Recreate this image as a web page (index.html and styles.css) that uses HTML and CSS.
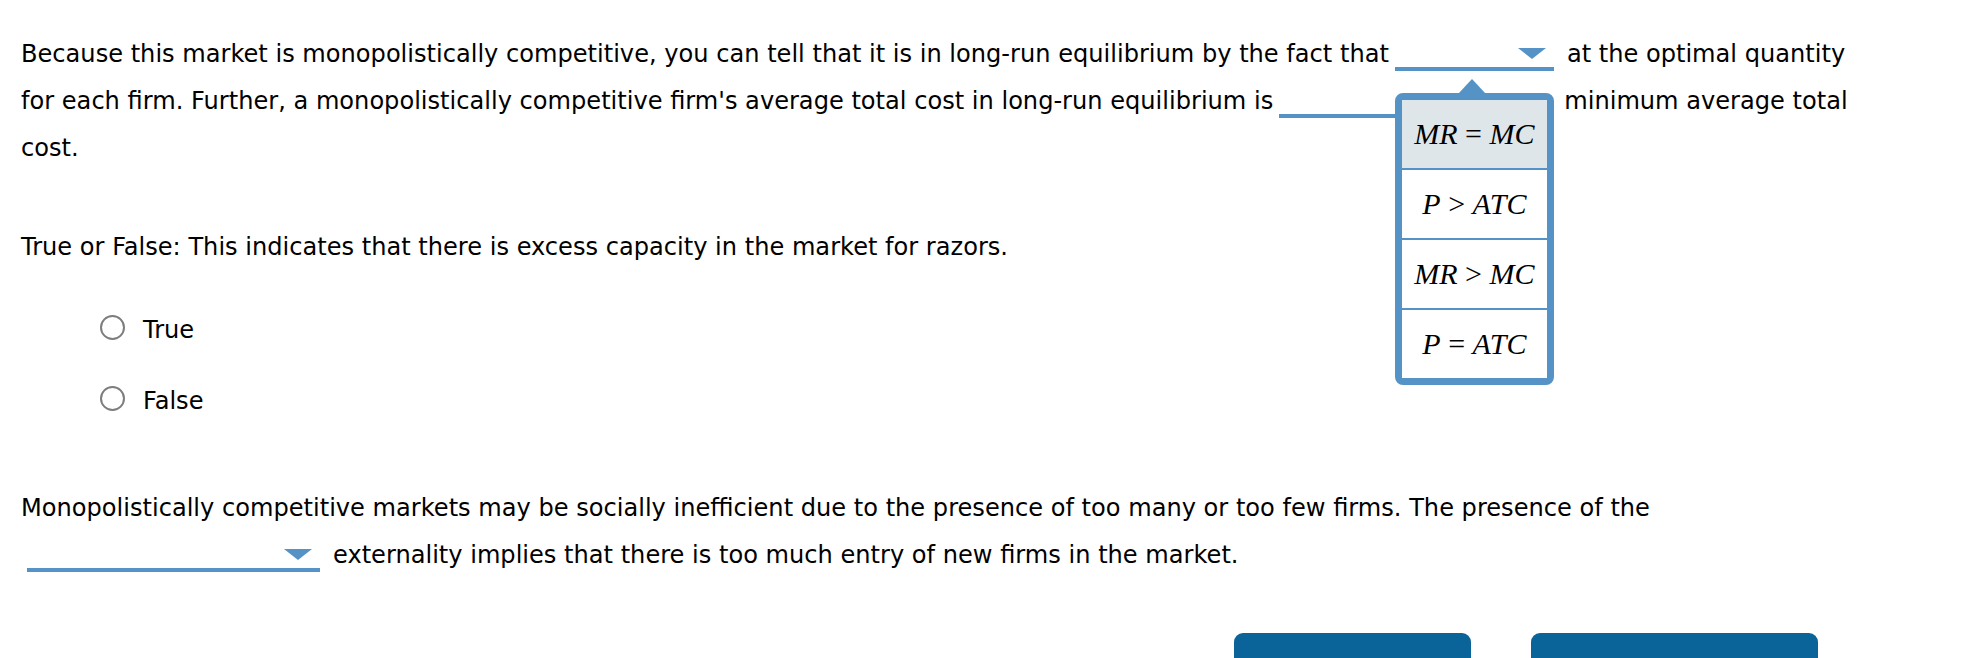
FILE: index.html
```html
<!DOCTYPE html>
<html>
<head>
<meta charset="utf-8">
<link rel="stylesheet" href="styles.css">
</head>
<body>
<div class="page">
  <div class="para q1">Because this market is monopolistically competitive, you can tell that it is in long-run equilibrium by the fact that<span class="dd dd-a"><svg class="caret" viewBox="0 0 28 11"><polygon points="0,0 28,0 14,11" /></svg><span class="menu"><svg class="menu-arrow" viewBox="0 0 28 16"><polygon points="0,16 14,1 28,16" /></svg><span class="opt opt-active"><span class="mi">MR</span><span class="mo">=</span><span class="mi">MC</span></span><span class="opt"><span class="mi">P</span><span class="mo">&gt;</span><span class="mi">ATC</span></span><span class="opt"><span class="mi">MR</span><span class="mo">&gt;</span><span class="mi">MC</span></span><span class="opt"><span class="mi">P</span><span class="mo">=</span><span class="mi">ATC</span></span></span></span>at the optimal quantity for each firm. Further, a monopolistically competitive firm's average total cost in long-run equilibrium is<span class="dd dd-b"><svg class="caret" viewBox="0 0 28 11"><polygon points="0,0 28,0 14,11" /></svg></span>minimum average total cost.</div>

  <div class="para q2">True or False: This indicates that there is excess capacity in the market for razors.</div>

  <div class="options">
    <div class="option"><span class="radio"></span>True</div>
    <div class="option"><span class="radio"></span>False</div>
  </div>

  <div class="para q3">Monopolistically competitive markets may be socially inefficient due to the presence of too many or too few firms. The presence of the<span class="dd dd-c"><svg class="caret" viewBox="0 0 28 11"><polygon points="0,0 28,0 14,11" /></svg></span>externality implies that there is too much entry of new firms in the market.</div>
</div>
<div class="actions">
  <span class="btn btn-1"></span>
  <span class="btn btn-2"></span>
</div>
</body>
</html>
```
FILE: styles.css
```css
* { box-sizing: border-box; }
html { overflow: hidden; }
body {
  margin: 0;
  background: #ffffff;
  color: #000000;
  font-family: "DejaVu Sans", Verdana, sans-serif;
  font-size: 24.1px;
}
.page {
  padding: 31px 0 0 21px;
}
.para {
  line-height: 47px;
  max-width: 1852px;
}
.q2 { margin-top: 52px; }
.q3 { margin-top: 60px; }

.dd {
  display: inline-block;
  position: relative;
  height: 24px;
  border-bottom: 4px solid #5593c6;
  vertical-align: -9px;
  margin: 0 13px 0 6px;
}
.dd-a { width: 159px; z-index: 5; }
.dd-b { width: 272px; }
.dd-c { width: 293px; }
.caret {
  position: absolute;
  right: 8px;
  top: 1px;
  width: 28px;
  height: 11px;
  fill: #5593c6;
}

.menu {
  position: absolute;
  left: 0;
  top: calc(100% + 26px);
  width: 159px;
  display: flex;
  flex-direction: column;
  border: 7px solid #5593c6;
  border-radius: 8px;
  background: #ffffff;
  z-index: 10;
}
.menu-arrow {
  position: absolute;
  left: 56px;
  top: -22px;
  width: 28px;
  height: 16px;
  fill: #5593c6;
}
.opt {
  box-sizing: content-box;
  height: 68px;
  display: flex;
  align-items: center;
  justify-content: center;
  font-family: "Liberation Serif", "Times New Roman", serif;
  font-size: 30px;
  line-height: 1;
  background: #ffffff;
}
.opt + .opt { border-top: 2px solid #5593c6; }
.opt-active { background: #dfe6ea; }
.mi { font-style: italic; }
.mo { margin: 0 0.25em; }

.options {
  margin: 36px 0 0 79px;
  display: flex;
  flex-direction: column;
  gap: 24px;
}
.option { line-height: 47px; }
.radio {
  display: inline-block;
  width: 25px;
  height: 25px;
  border: 2px solid #7d7d7d;
  border-radius: 50%;
  vertical-align: -1.5px;
  margin-right: 18px;
}

.actions {
  display: flex;
  justify-content: flex-end;
  gap: 60px;
  padding-right: 154px;
  margin-top: 54px;
}
.btn {
  display: block;
  height: 50px;
  background: #0a6399;
  border-radius: 9px 9px 0 0;
}
.btn-1 { width: 237px; }
.btn-2 { width: 287px; }
```
